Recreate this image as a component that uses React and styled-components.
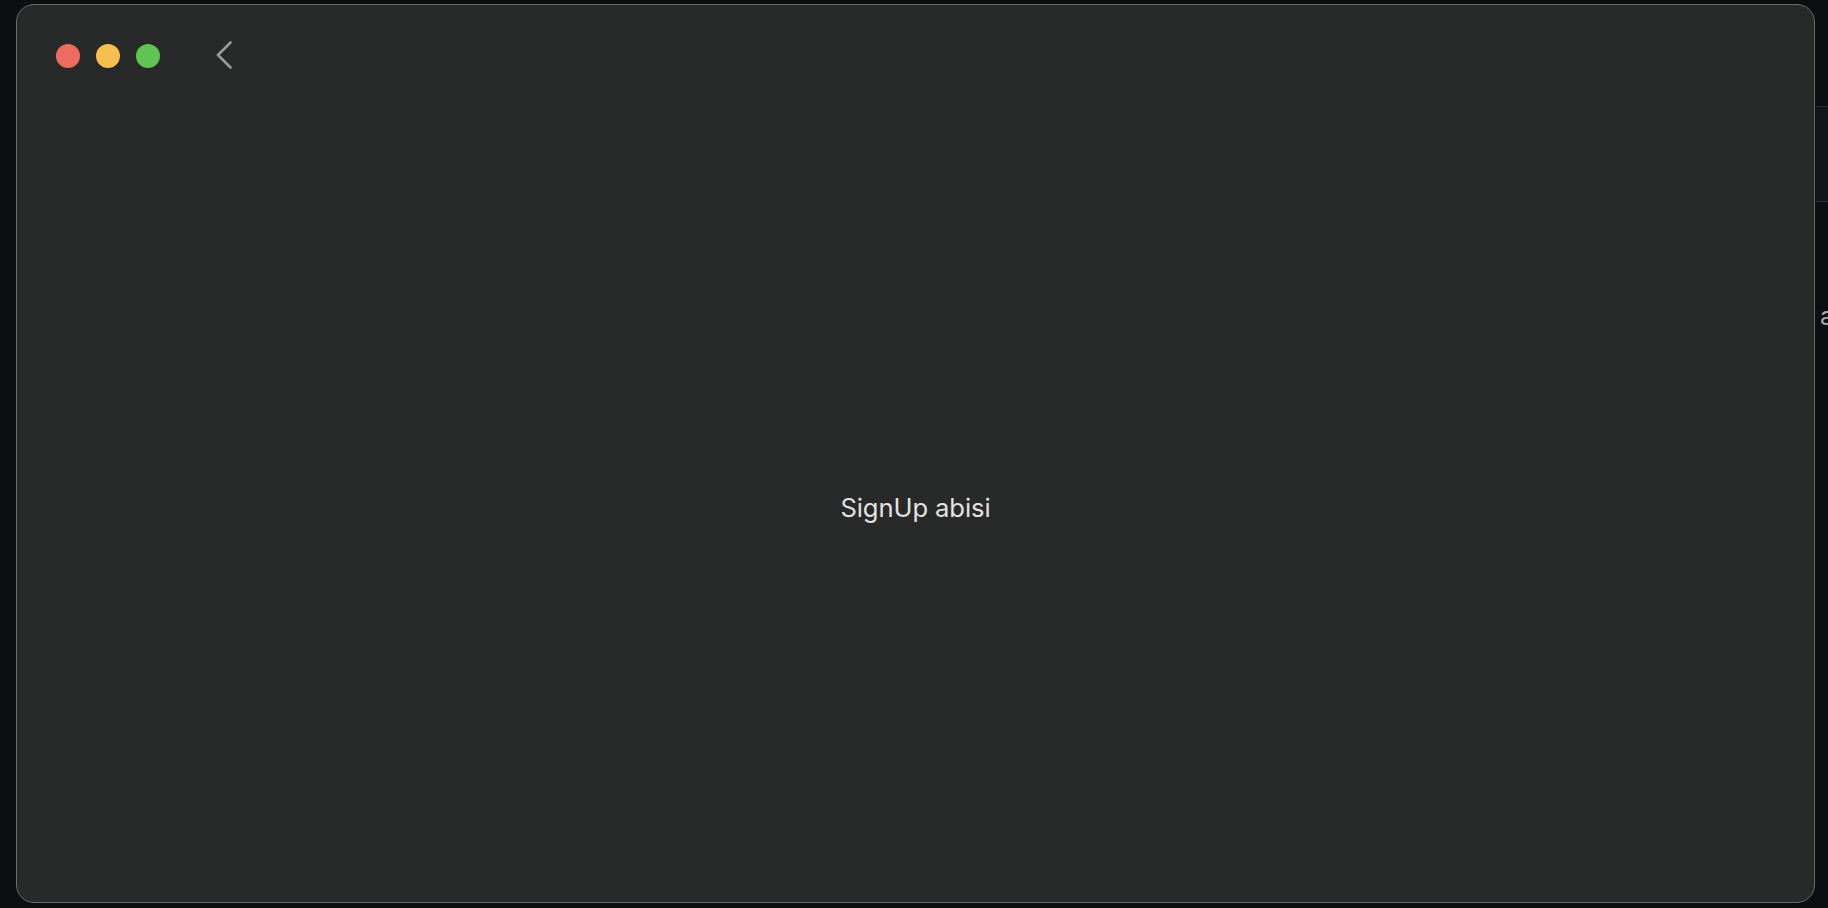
import React from "react";
import styled, { createGlobalStyle } from "styled-components";

const GlobalStyle = createGlobalStyle`
    html, body {
        margin: 0;
        padding: 0;
        height: 100%;
        background: #0c0e12;
        overflow: hidden;
    }
    #root {
        height: 100%;
    }
`;

const Page = styled.div`
    display: flex;
    flex-flow: row;
    height: 100%;
    box-sizing: border-box;
    padding-left: 16px;
    font-family: Inter, "Noto Sans", sans-serif;
`;

const Window = styled.div`
    flex: 1;
    display: flex;
    flex-flow: column;
    margin: 4px 0 5px;
    background: #282929;
    border: 1.5px solid #6a6b6b;
    border-radius: 18px;
    box-sizing: border-box;
`;

const TitleBar = styled.div`
    display: flex;
    align-items: flex-start;
    height: 104px;
    padding: 36.5px 0 0 38.5px;
    box-sizing: border-box;
`;

const Controls = styled.div`
    display: flex;
    align-items: center;
    height: 28px;
`;

const Lights = styled.div`
    display: flex;
    gap: 16px;
`;

const Light = styled.span`
    width: 24px;
    height: 24px;
    border-radius: 50%;
    background: ${(p) => p.$color};
`;

const BackButton = styled.button`
    display: inline-flex;
    margin-left: 56px;
    margin-top: -2px;
    padding: 0;
    border: 0;
    background: none;
    cursor: pointer;
`;

const Content = styled.div`
    flex: 1;
    display: flex;
    align-items: center;
    justify-content: center;
    padding-top: 4px;
`;

const Message = styled.p`
    margin: 0;
    font-size: 25.6px;
    color: #e2e2e2;
    letter-spacing: -0.1px;
`;

const BehindEdge = styled.div`
    width: 12px;
    display: flex;
    flex-flow: column;
    overflow: hidden;
    margin-left: 1px;
`;

const BehindBand = styled.div`
    margin-top: 106px;
    height: 94px;
    background: #13151a;
    border-top: 1px solid #2a2d31;
    border-bottom: 1px solid #2a2d31;
`;

const BehindText = styled.span`
    margin-top: 99px;
    padding-left: 4px;
    font-size: 25px;
    color: #a9abad;
    white-space: nowrap;
`;

export default function App() {
    return (
        <>
            <GlobalStyle />
            <Page>
                <Window>
                    <TitleBar>
                        <Controls>
                            <Lights>
                                <Light $color="#ef6b60" />
                                <Light $color="#f6bf4f" />
                                <Light $color="#5fc452" />
                            </Lights>
                            <BackButton aria-label="Back">
                                <svg width="16" height="28" viewBox="0 0 16 28">
                                    <polyline
                                        points="14.5,1.5 2,14 14.5,26.5"
                                        fill="none"
                                        stroke="#9b9b9b"
                                        strokeWidth="2.6"
                                        strokeLinecap="round"
                                        strokeLinejoin="round"
                                    />
                                </svg>
                            </BackButton>
                        </Controls>
                    </TitleBar>
                    <Content>
                        <Message>SignUp abisi</Message>
                    </Content>
                </Window>
                <BehindEdge>
                    <BehindBand />
                    <BehindText>a</BehindText>
                </BehindEdge>
            </Page>
        </>
    );
}
